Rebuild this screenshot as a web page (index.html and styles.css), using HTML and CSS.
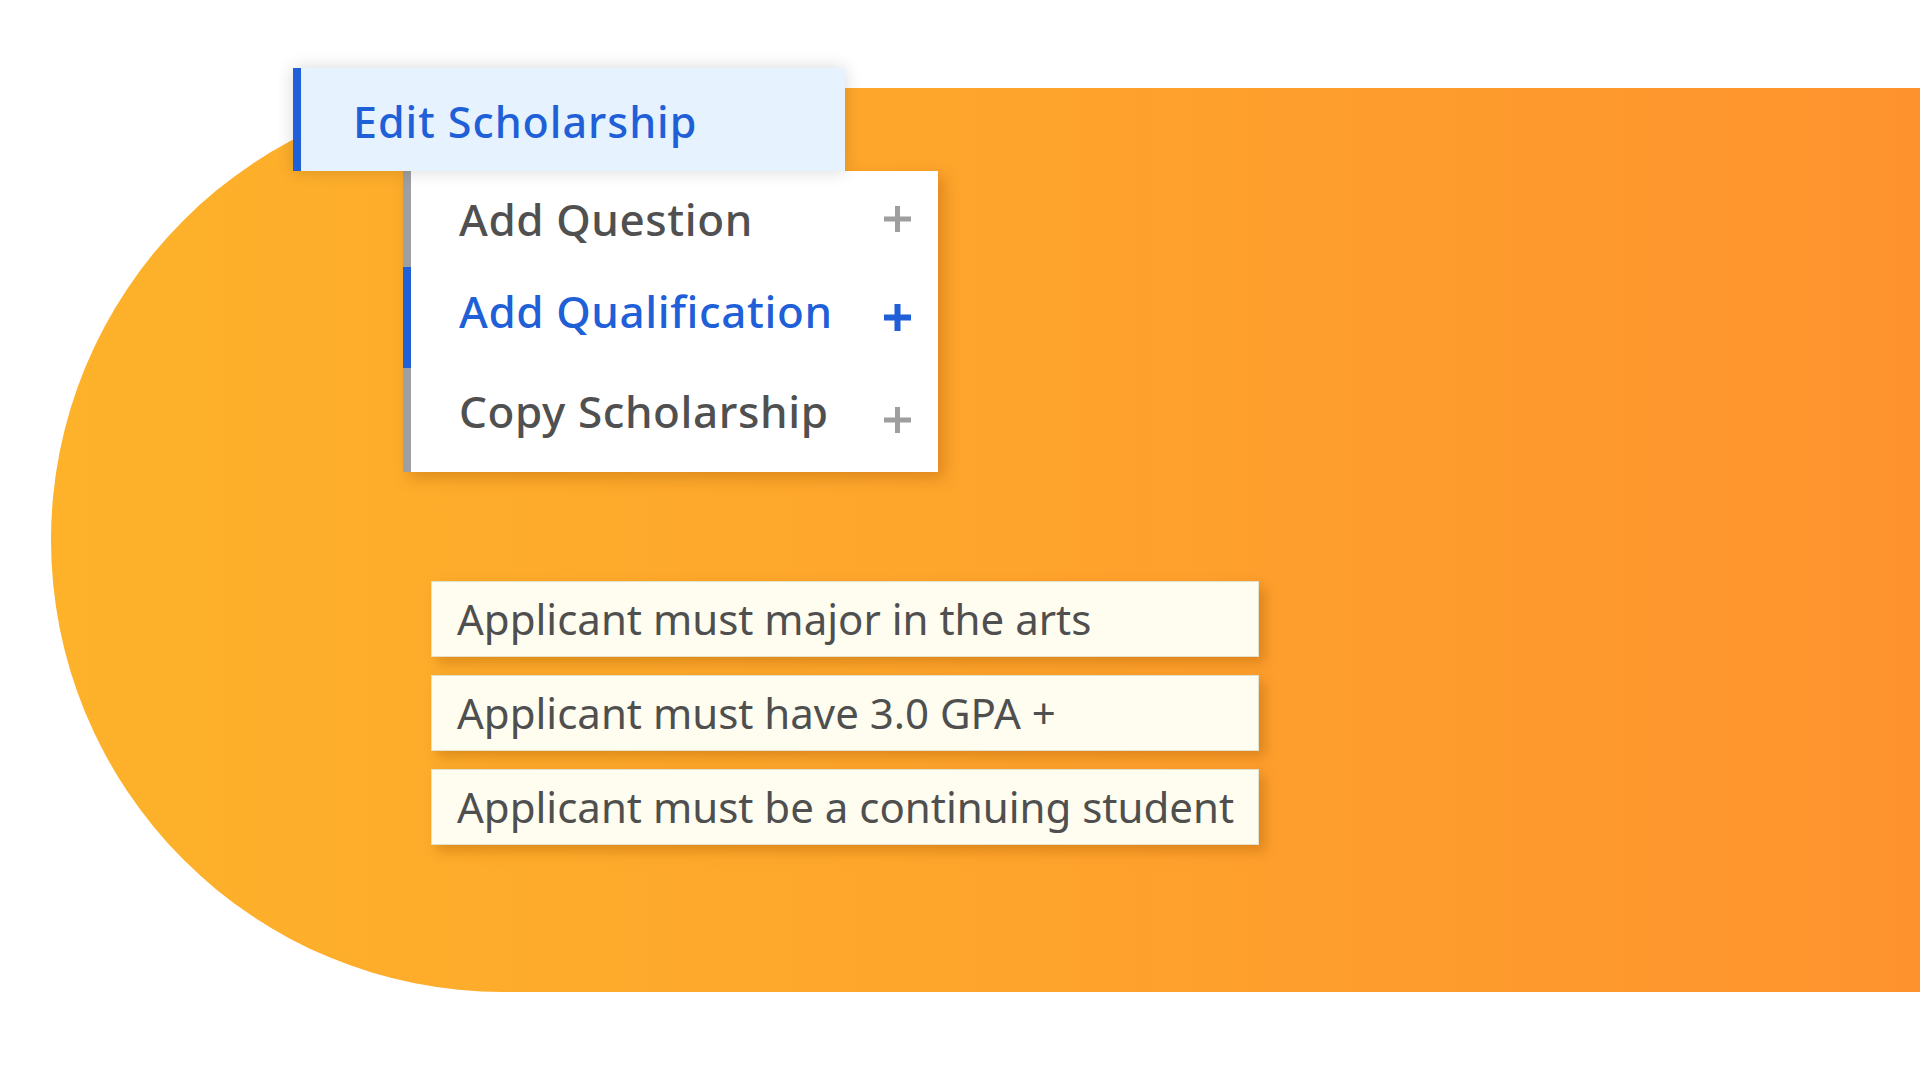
FILE: index.html
```html
<!DOCTYPE html>
<html lang="en">
<head>
<meta charset="utf-8">
<title>Edit Scholarship</title>
<link rel="stylesheet" href="styles.css">
</head>
<body>
<div class="page">
  <div class="band">
    <div class="menu-wrap">
      <div class="edit-head">Edit Scholarship</div>
      <ul class="menu">
        <li class="menu-item">
          <span class="menu-label">Add Question</span>
          <svg class="plus" width="27" height="26" viewBox="0 0 27 26"><rect x="0" y="10.5" width="27" height="5" fill="#9e9e9e"/><rect x="11" y="0" width="5" height="26" fill="#9e9e9e"/></svg>
        </li>
        <li class="menu-item is-active">
          <span class="menu-label">Add Qualification</span>
          <svg class="plus" width="27" height="27" viewBox="0 0 27 27"><rect x="0" y="10.5" width="27" height="6" fill="#1f5fd8"/><rect x="10.5" y="0" width="6" height="27" fill="#1f5fd8"/></svg>
        </li>
        <li class="menu-item">
          <span class="menu-label">Copy Scholarship</span>
          <svg class="plus" width="27" height="26" viewBox="0 0 27 26"><rect x="0" y="10.5" width="27" height="5" fill="#9e9e9e"/><rect x="11" y="0" width="5" height="26" fill="#9e9e9e"/></svg>
        </li>
      </ul>
    </div>
    <div class="cards">
      <div class="card">Applicant must major in the arts</div>
      <div class="card">Applicant must have 3.0 GPA +</div>
      <div class="card">Applicant must be a continuing student</div>
    </div>
  </div>
</div>
</body>
</html>
```

FILE: styles.css
```css
html, body {
  margin: 0;
  padding: 0;
  background: #ffffff;
}

body {
  width: 1920px;
  height: 1079px;
  overflow: hidden;
  font-family: "Noto Sans", "Open Sans", "Liberation Sans", sans-serif;
}

.page {
  padding-top: 88px;
  padding-left: 51px;
}

.band {
  height: 904px;
  border-radius: 452px 0 0 452px;
  background: linear-gradient(90deg, #fdb22a 0%, #fea62c 45%, #fe932e 100%);
  display: flex;
  flex-direction: column;
}

.menu-wrap {
  margin-top: -20px;
  margin-left: 242px;
  display: flex;
  flex-direction: column;
  align-items: flex-start;
}

.edit-head {
  box-sizing: border-box;
  width: 552px;
  height: 103px;
  border-left: 8px solid #1f5fd8;
  background: #e6f2fe;
  color: #1f5fd8;
  font-size: 43px;
  font-weight: 500;
  letter-spacing: 1px;
  line-height: 60px;
  padding: 24px 0 0 52px;
  box-shadow: 0 0 16px rgba(0, 0, 0, 0.16);
  position: relative;
  z-index: 2;
}

.menu {
  list-style: none;
  margin: 0 0 0 110px;
  padding: 0;
  width: 535px;
  background: #ffffff;
  box-shadow: 6px 6px 14px rgba(160, 80, 0, 0.35);
  position: relative;
  z-index: 1;
}

.menu-item {
  box-sizing: border-box;
  height: 101px;
  border-left: 8px solid #9e9fa3;
  display: flex;
  align-items: center;
  justify-content: space-between;
  padding: 0 27px 0 48px;
  color: #505050;
}

.menu-item:first-child {
  height: 96px;
}

.menu-item:last-child {
  height: 104px;
}

.menu-item.is-active {
  border-left-color: #1f5fd8;
  color: #1f5fd8;
}

.menu-label {
  align-self: flex-start;
  padding-top: 16px;
  font-size: 44px;
  font-weight: 500;
  letter-spacing: 0.6px;
  line-height: 60px;
}

.menu-item:first-child .menu-label {
  padding-top: 18px;
}

.menu-item.is-active .menu-label {
  padding-top: 14px;
}

.menu-item:last-child .menu-label {
  padding-top: 13px;
}

.plus {
  display: block;
  flex: none;
}

.cards {
  margin-top: 109px;
  margin-left: 380px;
  display: flex;
  flex-direction: column;
  gap: 18px;
}

.card {
  box-sizing: border-box;
  width: 828px;
  height: 76px;
  background: #fefdf0;
  border: 1px solid #e6e1cc;
  color: #4f4f4f;
  font-size: 42px;
  line-height: 70px;
  padding: 2px 0 0 25px;
  white-space: nowrap;
  box-shadow: 6px 6px 12px rgba(170, 90, 0, 0.4);
}
```
